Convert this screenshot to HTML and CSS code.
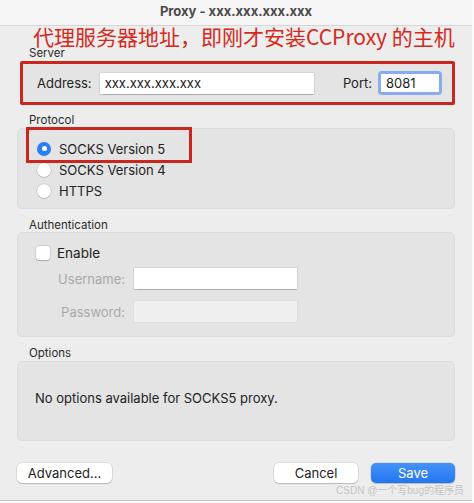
FILE: index.html
```html
<!DOCTYPE html>
<html lang="zh">
<head>
<meta charset="utf-8">
<title>Proxy</title>
<link rel="stylesheet" href="styles.css">
</head>
<body>
<div class="window">
  <div class="titlebar">Proxy - xxx.xxx.xxx.xxx</div>
  <div class="content">
    <div class="annotation">代理服务器地址，即刚才安装CCProxy 的主机</div>

    <div class="section-label">Server</div>
    <div class="group server highlight">
      <span class="label">Address:</span>
      <span class="field address">xxx.xxx.xxx.xxx</span>
      <span class="label port-label">Port:</span>
      <span class="focus-ring"><span class="field port">8081</span></span>
    </div>

    <div class="section-label gap">Protocol</div>
    <div class="group protocol">
      <div class="radio-row"><span class="radio checked"></span><span>SOCKS Version 5</span></div>
      <div class="radio-row"><span class="radio"></span><span>SOCKS Version 4</span></div>
      <div class="radio-row"><span class="radio"></span><span>HTTPS</span></div>
      <div class="mark"></div>
    </div>

    <div class="section-label gap auth-label">Authentication</div>
    <div class="group auth">
      <div class="check-row"><span class="checkbox"></span><span>Enable</span></div>
      <div class="form-row"><span class="form-label">Username:</span><span class="field user"></span></div>
      <div class="form-row second"><span class="form-label">Password:</span><span class="field pass"></span></div>
    </div>

    <div class="section-label gap opt-label">Options</div>
    <div class="group options">No options available for SOCKS5 proxy.</div>

    <div class="buttons">
      <span class="btn advanced">Advanced...</span>
      <span class="spacer"></span>
      <span class="btn cancel">Cancel</span>
      <span class="btn save">Save</span>
    </div>
  </div>
  <div class="watermark">CSDN @一个写bug的程序员</div>
</div>
</body>
</html>
```

FILE: styles.css
```css
* { box-sizing: border-box; }
html, body { margin: 0; padding: 0; }
body {
  background: #fafafa;
  font-family: Inter, "Liberation Sans", "Noto Sans CJK SC", sans-serif;
  font-size: 13px;
  color: #222;
}
.window {
  position: relative;
  width: 472px;
  height: 501px;
  background: #ededed;
  border-bottom: 1px solid #c8c8c8;
}
.titlebar {
  height: 26px;
  line-height: 23px;
  text-align: center;
  font-weight: 700;
  font-size: 13px;
  color: #4a4a4a;
  background: #f5f5f5;
  border-bottom: 1px solid #d6d6d6;
}
.content { padding: 0 17px; }
.annotation {
  height: 21px;
  line-height: 21px;
  padding-left: 16px;
  font-family: "Noto Sans CJK SC", sans-serif;
  font-size: 21px;
  color: #d42a1e;
  white-space: nowrap;
}
.section-label {
  height: 12px;
  line-height: 12px;
  margin-bottom: 2px;
  padding-left: 12px;
  font-size: 11.5px;
  color: #2b2b2b;
}
.section-label.gap { margin-top: 9px; }
.section-label.auth-label { margin-top: 10px; margin-bottom: 1px; }
.section-label.opt-label { margin-top: 10px; }
.group {
  position: relative;
  background: #e4e4e4;
  border: 1px solid #dcdcdc;
  border-radius: 5px;
}
.server {
  display: flex;
  align-items: center;
  height: 44px;
  margin-left: 3px;
  padding: 0 10px 0 14px;
}
.highlight {
  border: 3px solid #c9271d;
  border-radius: 2px;
}
.label { color: #222; }
.field {
  display: block;
  height: 21px;
  line-height: 21px;
  padding-left: 5px;
  background: #fff;
  box-shadow: 0 0 0 0.5px rgba(0,0,0,0.12), 0 0.5px 1px rgba(0,0,0,0.2);
  color: #222;
}
.address { width: 214px; margin-left: 8px; }
.port-label { margin-left: auto; margin-right: 6px; }
.focus-ring {
  display: block;
  padding: 3px;
  border-radius: 4px;
  background: #89acee;
}
.port { width: 58px; height: 18px; line-height: 18px; box-shadow: none; }
.protocol {
  height: 81px;
  padding: 9px 0 0 19px;
}
.radio-row {
  display: flex;
  align-items: center;
  height: 21px;
  gap: 8px;
}
.radio {
  width: 14px;
  height: 14px;
  border-radius: 50%;
  background: #fff;
  box-shadow: 0 0 0 0.5px rgba(0,0,0,0.15), 0 0.5px 1px rgba(0,0,0,0.2);
  position: relative;
}
.radio.checked { background: #2b7ef4; box-shadow: none; }
.radio.checked::after {
  content: "";
  position: absolute;
  left: 4.5px;
  top: 4.5px;
  width: 5px;
  height: 5px;
  border-radius: 50%;
  background: #fff;
}
.mark {
  position: absolute;
  left: 8px;
  top: -2px;
  width: 166px;
  height: 36px;
  border: 3px solid #c9271d;
}
.auth {
  height: 105px;
  padding: 11px 0 0 0;
}
.check-row {
  display: flex;
  align-items: center;
  gap: 7px;
  height: 17px;
  padding-left: 18px;
  font-size: 13.5px;
}
.checkbox {
  width: 14px;
  height: 14px;
  border-radius: 3px;
  background: #fff;
  box-shadow: 0 0 0 0.5px rgba(0,0,0,0.15), 0 0.5px 1px rgba(0,0,0,0.2);
}
.form-row {
  display: flex;
  align-items: center;
  margin-top: 7px;
}
.form-row.second { margin-top: 12px; }
.form-label {
  width: 107px;
  text-align: right;
  color: #a9a9a9;
}
.user, .pass { width: 163px; margin-left: 9px; }
.pass { background: #efefef; box-shadow: 0 0 0 0.5px rgba(0,0,0,0.06); }
.options {
  height: 80px;
  padding: 28px 0 0 17px;
  line-height: 16px;
}
.buttons {
  display: flex;
  margin-top: 22px;
}
.spacer { flex: 1; }
.btn {
  display: block;
  height: 20px;
  line-height: 20px;
  text-align: center;
  background: #fff;
  border-radius: 5px;
  box-shadow: 0 0 0 0.5px rgba(0,0,0,0.15), 0 1px 1px rgba(0,0,0,0.15);
  color: #222;
}
.advanced { width: 95px; }
.cancel { width: 84px; }
.save {
  width: 84px;
  margin-left: 13px;
  color: #fff;
  background: linear-gradient(#4592f8, #2276f0);
}
.watermark {
  position: absolute;
  right: 8px;
  bottom: 4px;
  font-size: 10px;
  line-height: 10px;
  color: #c4c4c4;
  font-family: "Liberation Sans", "Noto Sans CJK SC", sans-serif;
}
```
